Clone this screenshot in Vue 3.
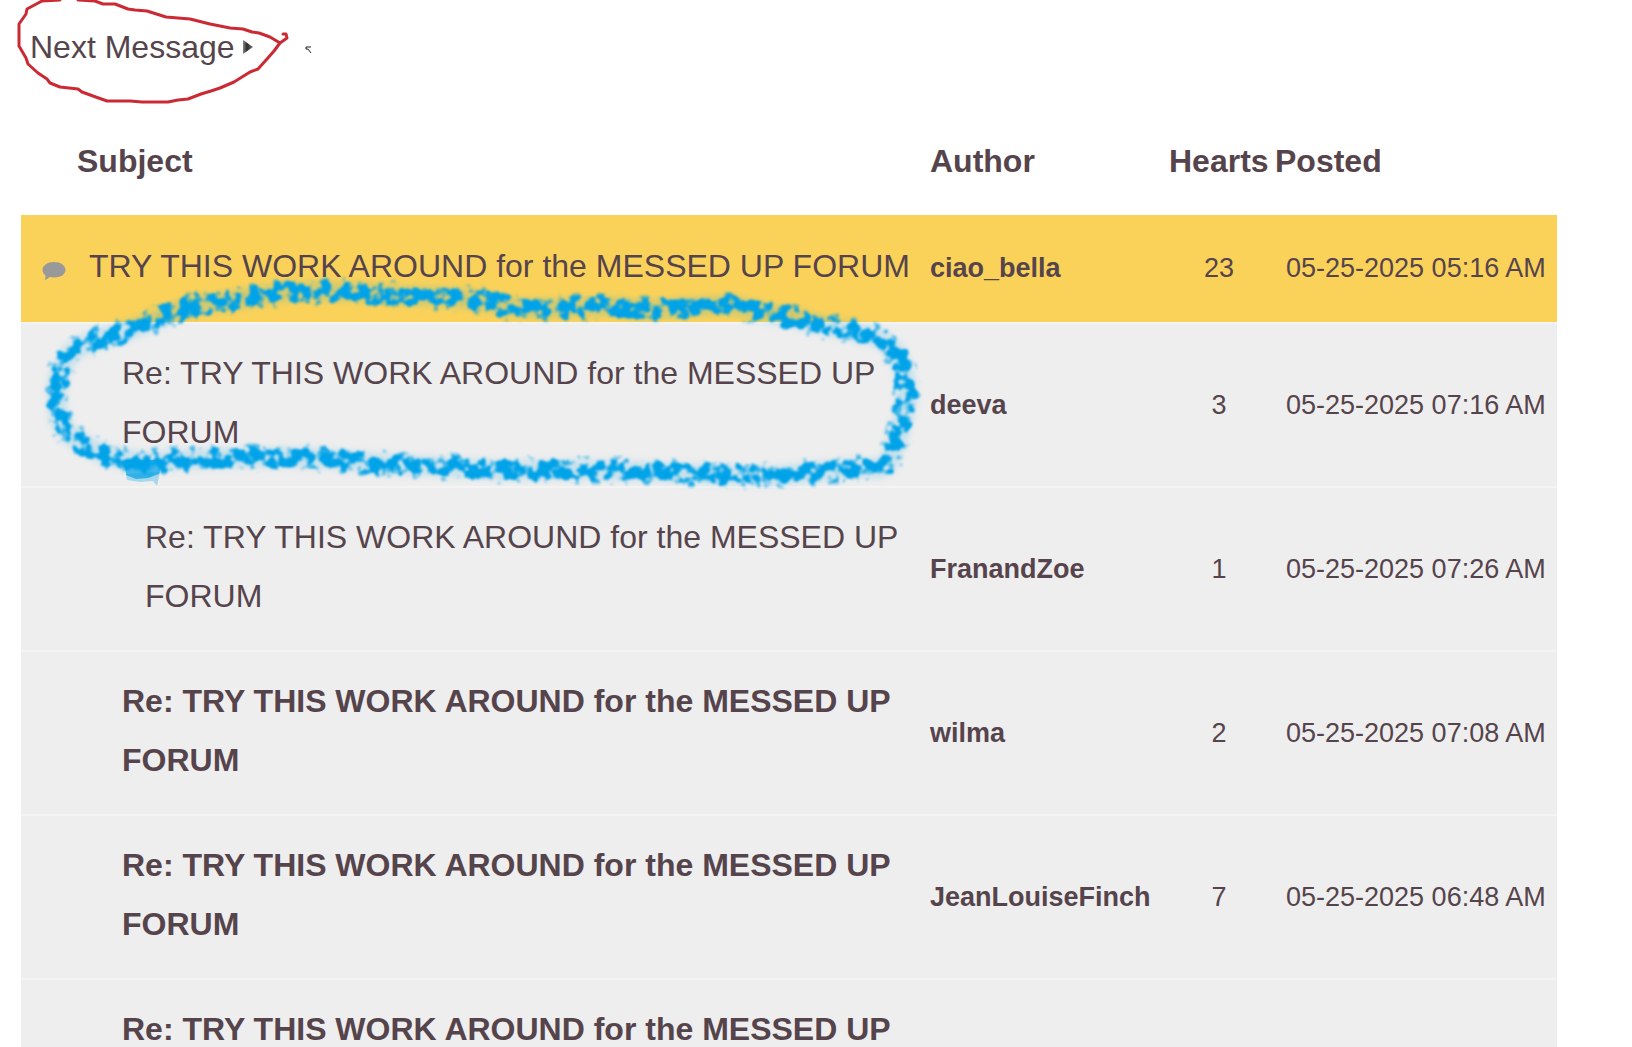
<script setup>
const title = 'TRY THIS WORK AROUND for the MESSED UP FORUM'

const messages = [
  { id: 1, subject: title, author: 'ciao_bella', hearts: 23, posted: '05-25-2025 05:16 AM', depth: 0, current: true },
  { id: 2, subject: `Re: ${title}`, author: 'deeva', hearts: 3, posted: '05-25-2025 07:16 AM', depth: 1 },
  { id: 3, subject: `Re: ${title}`, author: 'FranandZoe', hearts: 1, posted: '05-25-2025 07:26 AM', depth: 2 },
  { id: 4, subject: `Re: ${title}`, author: 'wilma', hearts: 2, posted: '05-25-2025 07:08 AM', depth: 1, unread: true },
  { id: 5, subject: `Re: ${title}`, author: 'JeanLouiseFinch', hearts: 7, posted: '05-25-2025 06:48 AM', depth: 1, unread: true },
  { id: 6, subject: `Re: ${title}`, author: '', hearts: '', posted: '', depth: 1, unread: true },
]
</script>

<template>
  <main class="page">
    <nav class="pager">
      <a href="#next" class="next">
        Next Message
        <svg class="arrow" width="11" height="16" viewBox="0 0 11 16" aria-hidden="true">
          <defs>
            <linearGradient id="arrow-fill" x1="0" x2="1" y1="0" y2="0">
              <stop offset="0" stop-color="#888" />
              <stop offset="0.4" stop-color="#2b2b2b" />
              <stop offset="1" stop-color="#777" />
            </linearGradient>
          </defs>
          <path d="M0 0 L10 7 L0 14 Z" fill="url(#arrow-fill)" />
        </svg>
      </a>
    </nav>

    <table class="thread">
      <colgroup>
        <col class="col-icon" />
        <col />
        <col class="col-author" />
        <col class="col-hearts" />
        <col class="col-posted" />
      </colgroup>
      <thead>
        <tr>
          <td></td>
          <th scope="col">Subject</th>
          <th scope="col">Author</th>
          <th scope="col">Hearts</th>
          <th scope="col">Posted</th>
        </tr>
      </thead>
      <tbody>
        <tr v-for="m in messages" :key="m.id" :class="{ current: m.current, unread: m.unread }">
          <td class="icon">
            <svg v-if="m.current" width="24" height="20" viewBox="0 0 24 20" aria-hidden="true">
              <path
                d="M12 1 C18.500 1 23.500 4.400 23.500 9 C23.500 13.500 18.500 16.500 12 16.500 C10.500 16.500 9 16.300 7.600 16 C6 17.600 4.500 18.500 2.500 19 C3.300 17.500 3.700 16 3.500 14.500 C1.700 13 .500 11.200 .500 9 C.500 4.400 5.500 1 12 1 Z"
                fill="#999"
              />
            </svg>
          </td>
          <td :class="['subject', `depth-${m.depth}`]"><a href="#message">{{ m.subject }}</a></td>
          <td class="author"><a v-if="m.author" href="#author">{{ m.author }}</a></td>
          <td class="hearts">{{ m.hearts }}</td>
          <td class="posted">{{ m.posted }}</td>
        </tr>
      </tbody>
    </table>

    <svg class="marks" width="940" height="500" viewBox="0 0 940 500" fill="none" aria-hidden="true">
      <defs>
        <filter id="crayon" filterUnits="userSpaceOnUse" x="20" y="260" width="920" height="240" color-interpolation-filters="sRGB">
          <feTurbulence type="fractalNoise" baseFrequency="0.1" numOctaves="2" seed="7" />
          <feColorMatrix type="matrix" values="0 0 0 0 0  0 0 0 0 0  0 0 0 0 0  0 0 0 2.6 -0.8" result="grain" />
          <feGaussianBlur in="SourceAlpha" stdDeviation="4" result="soft" />
          <feComposite in="soft" in2="grain" operator="arithmetic" k1="0" k2="1.1" k3="1" k4="-1" result="sum" />
          <feComponentTransfer in="sum" result="mask">
            <feFuncA type="linear" slope="2.2" intercept="-0.3" />
          </feComponentTransfer>
          <feFlood flood-color="#00a2e8" />
          <feComposite in2="mask" operator="in" />
          <feGaussianBlur stdDeviation="0.8" />
        </filter>
        <filter id="haze" filterUnits="userSpaceOnUse" x="20" y="260" width="920" height="240">
          <feGaussianBlur stdDeviation="3" />
        </filter>
        <path
          id="loop"
          d="M57 397 C56 382 58 372 65 363 Q70 353 77 348 Q93 340 113 335 Q128 331 143 325 L180 310 Q196 304 213 303 Q230 302 247 298 Q268 294 287 292 L320 291 L360 292 L400 295 L440 297 Q470 298 493 303 Q508 308 525 308 L560 308 L610 306 L643 310 L687 307 L727 305 Q740 306 753 310 L793 318 L827 326 L860 333 Q878 336 887 344 Q900 354 903 370 Q908 384 906 402 Q904 420 898 437 L890 459 Q886 470 874 468 L843 469 L777 476 L727 475 L660 472 L610 470 L543 470 L493 470 L433 466 L383 464 L333 459 L283 457 L233 458 L200 459 L143 462 Q124 460 110 456 Q93 451 80 442 Q66 434 60 420 Q56 408 57 397"
        />
      </defs>

      <path
        d="M78 0 L95 1 L103 4 L115 4 L128 9 L135 10 L147 11 L166 17 L190 19 L210 24 L230 28 L243 29 L252 32 L259 33 L270 37 L280 43 L287 38 L286 34 L283 34 M280 43 L274 51 L267 59 L258 69 L250 72 L234 82 L220 88 L211 91 L201 94 L188 99 L178 100 L168 102 L142 102 L130 101 L107 101 L93 96 L82 92 L78 89 L60 87 L50 83 L47 79 L38 73 L28 64 L26 58 L19 46 L19 24 L26 14 L27 9 L42 1 L60 0"
        stroke="#cb2a35"
        stroke-width="3"
        stroke-linecap="round"
        stroke-linejoin="round"
      />
      <path d="M311 47 L306 47 L306 49 L308 49 L311 53" stroke="#222" stroke-width="1" />

      <use href="#loop" stroke="#00a2e8" stroke-opacity="0.16" stroke-width="20" filter="url(#haze)" />
      <g filter="url(#crayon)">
        <use href="#loop" stroke="#00a2e8" stroke-width="22" stroke-linejoin="round" />
      </g>
      <path d="M125 460 L163 460 L159 474 L148 478 L136 479 L126 475 Z" fill="#00a2e8" fill-opacity="0.7" />
      <path d="M126 474 L160 472 L157 486 L153 481 L140 482 L127 480 Z" fill="#00a2e8" fill-opacity="0.3" />
    </svg>
  </main>
</template>

<style>
body {
  margin: 0;
  background: #fff;
}
</style>

<style scoped>
.page {
  position: relative;
  box-sizing: border-box;
  height: 100vh;
  overflow: hidden;
  padding: 18px 75px 0 21px;
  color: #56444c;
  font-family: "Liberation Sans", Arial, sans-serif;
  font-size: 32px;
  line-height: 59px;
}

a {
  color: inherit;
  text-decoration: none;
}

.pager {
  padding-left: 9px;
}

.next {
  display: inline-flex;
  align-items: center;
  gap: 8px;
}

.thread {
  width: 100%;
  margin-top: 32px;
  table-layout: fixed;
  border-collapse: collapse;
}

.col-icon {
  width: 56px;
}

.col-author {
  width: 239px;
}

.col-hearts {
  width: 106px;
}

.col-posted {
  width: 282px;
}

th,
td {
  padding: 0;
  text-align: left;
}

th {
  padding: 23px 0 24px;
}

tbody tr {
  background: #eee;
}

tbody td {
  padding: 22px 0;
  border-bottom: 2px solid #f4f4f4;
  vertical-align: middle;
}

.subject {
  padding: 20px 0 24px;
}

tbody .current {
  background: #fad25a;
}

.current td {
  padding-top: 24px;
  padding-bottom: 24px;
}

.current .subject {
  padding-top: 22px;
  padding-bottom: 26px;
}

.thread .icon {
  padding-left: 21px;
}

.thread .current .icon {
  padding-top: 28px;
}

.icon svg {
  display: block;
}

.thread .depth-0 {
  padding-left: 12px;
}

.thread .depth-1 {
  padding-left: 45px;
}

.thread .depth-2 {
  padding-left: 68px;
}

.unread .subject,
.author {
  font-weight: bold;
}

.author,
.hearts,
.posted {
  font-size: 27px;
}

.thread .hearts {
  padding-right: 6px;
  text-align: center;
}

.thread .posted {
  padding-left: 11px;
  white-space: nowrap;
}

.marks {
  position: absolute;
  top: 0;
  left: 0;
  pointer-events: none;
}
</style>
